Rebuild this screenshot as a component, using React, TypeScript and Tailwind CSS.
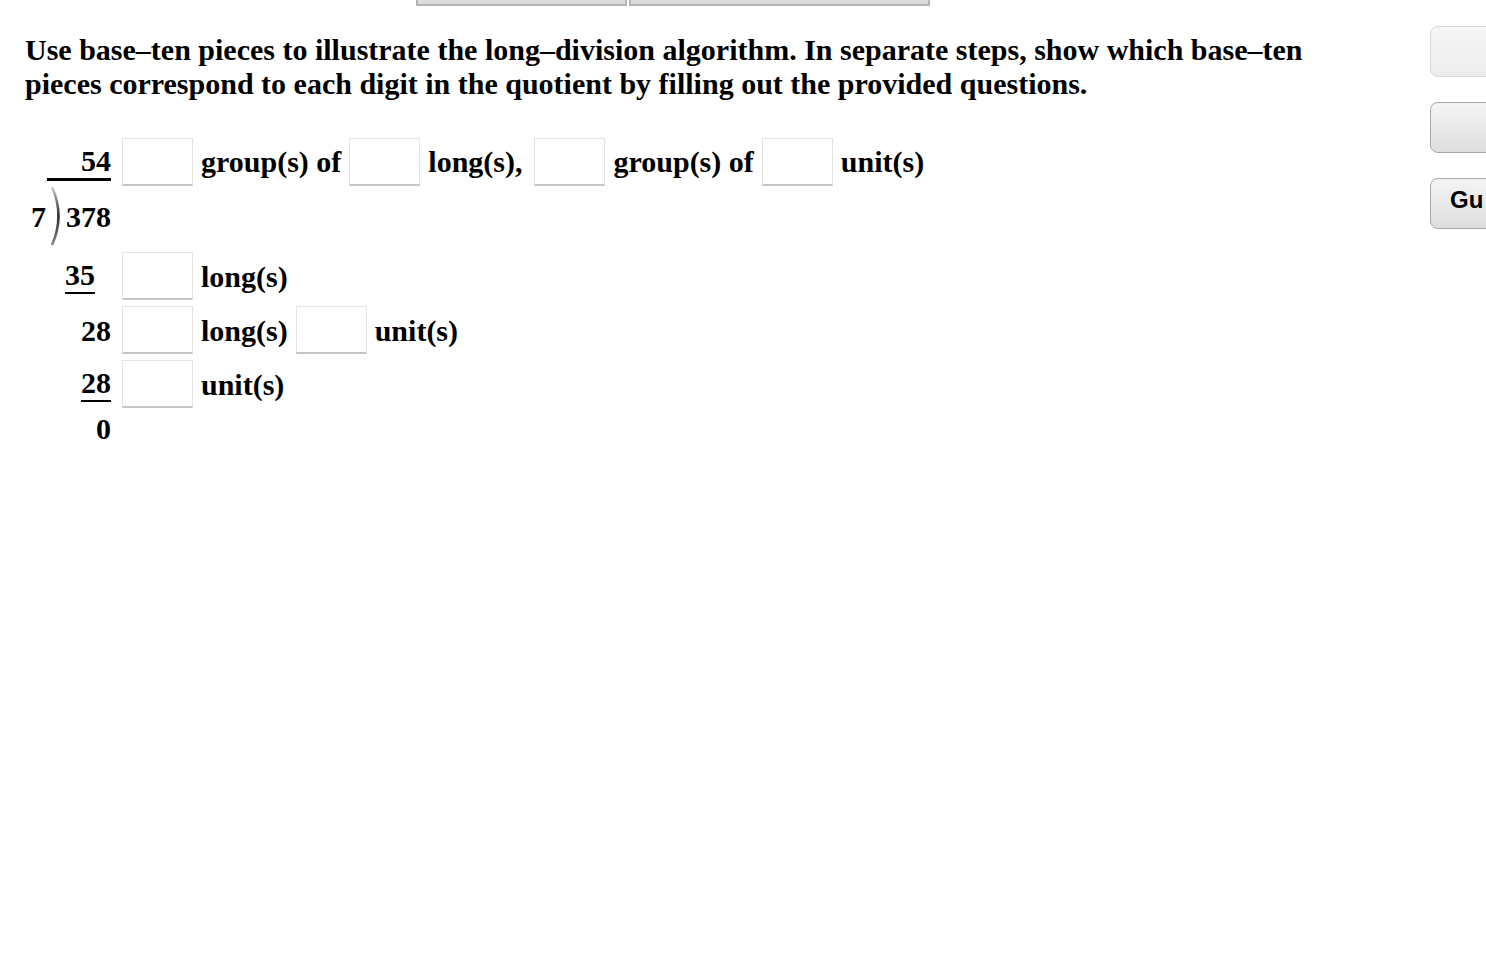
import React from "react";

function Blank({ className = "" }: { className?: string }) {
  return (
    <div
      className={`w-[71px] h-[48px] shrink-0 bg-white border border-[#e4e4e4] border-b-2 border-b-[#c6c6c6] ${className}`}
    />
  );
}

function Bracket() {
  return (
    <svg width="14" height="60" viewBox="0 0 14 60" className="shrink-0 -my-[6px] mx-[3px]">
      <defs>
        <linearGradient id="br" x1="0" y1="0" x2="0" y2="1">
          <stop offset="0" stopColor="#d0d0d0" />
          <stop offset="0.5" stopColor="#2a2a2a" />
          <stop offset="1" stopColor="#8a8a8a" />
        </linearGradient>
      </defs>
      <path d="M3 1 Q16 30 3 59" fill="none" stroke="url(#br)" strokeWidth="2.6" />
    </svg>
  );
}

export default function App() {
  return (
    <div
      className="w-[1486px] h-[974px] overflow-hidden bg-white text-black"
      style={{ fontFamily: '"Liberation Serif", "Times New Roman", serif' }}
    >
      {/* tab strip at the top */}
      <div className="ml-[416px] flex gap-[2px] h-[6px]">
        <div className="w-[211px] bg-[#dcdcdc] border-x-2 border-b-2 border-[#b4b4b4]" />
        <div className="w-[301px] bg-[#dcdcdc] border-x-2 border-b-2 border-[#b4b4b4]" />
      </div>

      <div className="flex">
        <main className="w-[1430px] shrink-0">
          <h1 className="pl-[25px] pt-[27px] text-[30px] leading-[34px] font-bold">
            Use base–ten pieces to illustrate the long–division algorithm. In separate steps, show which base–ten
            <br />
            pieces correspond to each digit in the quotient by filling out the provided questions.
          </h1>

          <div className="mt-[37px] text-[30px] font-bold">
            {/* quotient row */}
            <div className="flex items-start h-[48px] gap-[8px]">
              <div className="w-[111px] shrink-0 flex justify-end">
                <div className="w-[64px] h-[43px] border-b-[3px] border-black text-right leading-[46px]">54</div>
              </div>
              <Blank className="ml-[3px]" />
              <span className="leading-[48px]">group(s) of</span>
              <Blank />
              <span className="leading-[48px]">long(s),</span>
              <Blank className="ml-[4px]" />
              <span className="leading-[48px]">group(s) of</span>
              <Blank />
              <span className="leading-[48px]">unit(s)</span>
            </div>

            {/* dividend row */}
            <div className="flex items-center h-[48px] mt-[6px]">
              <div className="w-[111px] shrink-0 flex justify-end items-center">
                <span>7</span>
                <Bracket />
                <span>378</span>
              </div>
            </div>

            <div className="flex items-center h-[48px] mt-[12px] gap-[8px]">
              <div className="w-[111px] shrink-0 flex justify-end pr-[16px]">
                <span className="border-b-2 border-black leading-[34px]">35</span>
              </div>
              <Blank className="ml-[3px]" />
              <span>long(s)</span>
            </div>

            <div className="flex items-center h-[48px] mt-[6px] gap-[8px]">
              <div className="w-[111px] shrink-0 text-right">28</div>
              <Blank className="ml-[3px]" />
              <span>long(s)</span>
              <Blank />
              <span>unit(s)</span>
            </div>

            <div className="flex items-center h-[48px] mt-[6px] gap-[8px]">
              <div className="w-[111px] shrink-0 flex justify-end">
                <span className="border-b-2 border-black leading-[34px]">28</span>
              </div>
              <Blank className="ml-[3px]" />
              <span>unit(s)</span>
            </div>

            <div className="flex items-center h-[40px]">
              <div className="w-[111px] shrink-0 text-right">0</div>
            </div>
          </div>
        </main>

        <aside
          className="w-[56px] shrink-0 pt-[20px] flex flex-col gap-[25px]"
          style={{ fontFamily: '"Liberation Sans", Arial, sans-serif' }}
        >
          <button className="w-[90px] h-[51px] shrink-0 rounded-[8px] border border-[#d6d6d6] bg-gradient-to-b from-[#f7f7f7] to-[#ececec]" />
          <button className="w-[90px] h-[51px] shrink-0 rounded-[8px] border border-[#a9a9a9] bg-gradient-to-b from-[#f4f4f4] to-[#dedede]" />
          <button className="w-[90px] h-[51px] shrink-0 rounded-[8px] border border-[#a9a9a9] bg-gradient-to-b from-[#f4f4f4] to-[#dedede] flex items-start pt-[9px] pl-[19px] text-[24px] leading-[24px] font-bold text-black">
            Gu
          </button>
        </aside>
      </div>
    </div>
  );
}
